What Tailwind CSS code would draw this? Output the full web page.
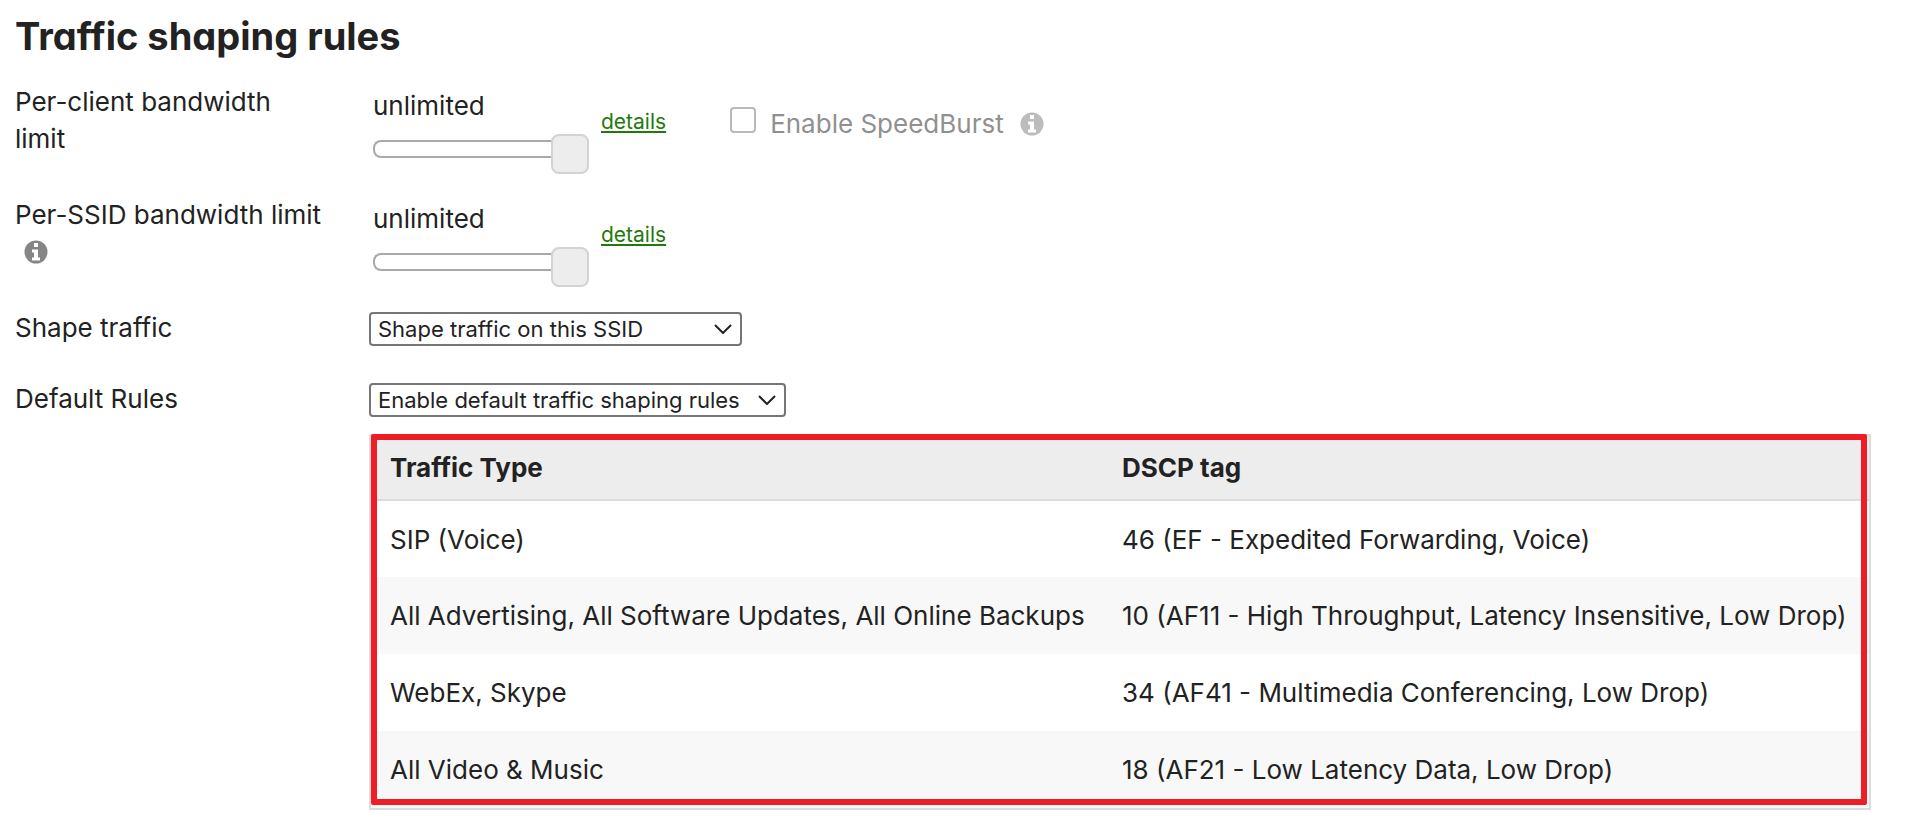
<!DOCTYPE html>
<html lang="en">
  <head>
    <meta charset="UTF-8" />
    <meta name="viewport" content="width=device-width, initial-scale=1.0" />
    <title>Traffic shaping rules</title>
    <script src="https://cdn.jsdelivr.net/npm/@tailwindcss/browser@4"></script>
  </head>
  <body class="bg-white font-['Inter',sans-serif] text-[26px] leading-[37px] text-[#222]">
    <main class="pl-[15px] pr-[54px] pt-[11px]">
      <h1 class="mb-[22px] text-[38px] leading-[50px] font-bold [font-feature-settings:'cv11','ss03']">
        Traffic shaping rules
      </h1>

      <form class="grid grid-cols-[354px_1fr]">
        <!-- Per-client limit -->
        <label for="clientLimit" class="h-[113px] pr-16">Per-client bandwidth limit</label>
        <div class="flex h-[113px] items-start pl-1">
          <div class="mt-1 w-[216px]">
            <output for="clientLimit" class="block">unlimited</output>
            <input
              id="clientLimit"
              type="range"
              value="100"
              class="mt-4 block h-[18px] w-full appearance-none bg-transparent [&::-webkit-slider-runnable-track]:h-[18px] [&::-webkit-slider-runnable-track]:rounded-l-lg [&::-webkit-slider-runnable-track]:border-2 [&::-webkit-slider-runnable-track]:border-r-0 [&::-webkit-slider-runnable-track]:border-[#a9a9a9] [&::-webkit-slider-thumb]:-mt-2 [&::-webkit-slider-thumb]:h-10 [&::-webkit-slider-thumb]:w-[38px] [&::-webkit-slider-thumb]:appearance-none [&::-webkit-slider-thumb]:rounded-lg [&::-webkit-slider-thumb]:border-2 [&::-webkit-slider-thumb]:border-[#d3d3d3] [&::-webkit-slider-thumb]:bg-[#ededed]"
            />
          </div>
          <a href="#" class="mt-5 ml-3 text-[21px] text-[#1f7a0c] underline decoration-2 underline-offset-2">details</a>
          <div class="mt-[22px] ml-16 flex items-start">
            <input
              id="speedBurst"
              type="checkbox"
              disabled
              class="mt-0.5 size-[26px] appearance-none rounded border-2 border-[#b9b9b9] bg-white"
            />
            <label for="speedBurst" class="ml-[14px] text-[#909090]">Enable SpeedBurst</label>
            <svg viewBox="0 0 24 24" class="mt-[7px] ml-4 size-6" aria-hidden="true">
              <circle cx="12" cy="12" r="11.5" fill="#bcbcbc" />
              <path d="M10 3h4v4h-4zM8 9.500h6v8h2V20.500H8v-3h2v-5H8z" fill="#fff" />
            </svg>
          </div>
        </div>

        <!-- Per-SSID limit -->
        <label for="ssidLimit" class="h-[113px] pr-8">
          Per-SSID bandwidth limit
          <svg viewBox="0 0 24 24" class="mt-[7px] ml-[9px] size-6" aria-hidden="true">
            <circle cx="12" cy="12" r="11.500" fill="#858585" />
            <path d="M10 3h4v4h-4zM8 9.500h6v8h2V20.500H8v-3h2v-5H8z" fill="#fff" />
          </svg>
        </label>
        <div class="flex h-[113px] items-start pl-1">
          <div class="mt-1 w-[216px]">
            <output for="ssidLimit" class="block">unlimited</output>
            <input
              id="ssidLimit"
              type="range"
              value="100"
              class="mt-4 block h-[18px] w-full appearance-none bg-transparent [&::-webkit-slider-runnable-track]:h-[18px] [&::-webkit-slider-runnable-track]:rounded-l-lg [&::-webkit-slider-runnable-track]:border-2 [&::-webkit-slider-runnable-track]:border-r-0 [&::-webkit-slider-runnable-track]:border-[#a9a9a9] [&::-webkit-slider-thumb]:-mt-2 [&::-webkit-slider-thumb]:h-10 [&::-webkit-slider-thumb]:w-[38px] [&::-webkit-slider-thumb]:appearance-none [&::-webkit-slider-thumb]:rounded-lg [&::-webkit-slider-thumb]:border-2 [&::-webkit-slider-thumb]:border-[#d3d3d3] [&::-webkit-slider-thumb]:bg-[#ededed]"
            />
          </div>
          <a href="#" class="mt-5 ml-3 text-[21px] text-[#1f7a0c] underline decoration-2 underline-offset-2">details</a>
        </div>

        <!-- Shaping selects -->
        <label for="shapeTraffic" class="h-[71px]">Shape traffic</label>
        <div class="pt-[3px]">
          <div class="relative w-[373px]">
            <select
              id="shapeTraffic"
              class="block h-[34px] w-full appearance-none rounded border-2 border-[#767676] bg-white pl-[7px] text-[22px] leading-[30px]"
            >
              <option>Shape traffic on this SSID</option>
              <option>Don't shape traffic on this SSID</option>
            </select>
            <svg viewBox="0 0 18 10" class="pointer-events-none absolute top-3 right-[10px] h-[10px] w-[18px]" aria-hidden="true">
              <path d="M1 1l8 8 8-8" fill="none" stroke="#222" stroke-width="2" />
            </svg>
          </div>
        </div>

        <label for="defaultRules" class="h-[54px]">Default Rules</label>
        <div class="pt-[3px]">
          <div class="relative w-[417px]">
            <select
              id="defaultRules"
              class="block h-[34px] w-full appearance-none rounded border-2 border-[#767676] bg-white pl-[7px] text-[22px] leading-[30px]"
            >
              <option>Enable default traffic shaping rules</option>
              <option>Disable default traffic shaping rules</option>
            </select>
            <svg viewBox="0 0 18 10" class="pointer-events-none absolute top-3 right-[10px] h-[10px] w-[18px]" aria-hidden="true">
              <path d="M1 1l8 8 8-8" fill="none" stroke="#222" stroke-width="2" />
            </svg>
          </div>
        </div>

        <!-- Default rules table, framed in red -->
        <div class="relative col-start-2 border-2 border-[#dcdcdc]">
          <table class="w-full text-left whitespace-nowrap">
            <thead class="border-b-2 border-[#dcdcdc] bg-[#ededed]">
              <tr class="h-16">
                <th class="pl-[19px] font-bold">Traffic Type</th>
                <th class="w-[766px] pl-[19px] font-bold">DSCP tag</th>
              </tr>
            </thead>
            <tbody>
              <tr class="h-[77px]">
                <td class="pl-[19px]">SIP (Voice)</td>
                <td class="pl-[19px]">46 (EF - Expedited Forwarding, Voice)</td>
              </tr>
              <tr class="h-[77px] bg-[#f8f8f8]">
                <td class="pl-[19px]">All Advertising, All Software Updates, All Online Backups</td>
                <td class="pl-[19px]">10 (AF11 - High Throughput, Latency Insensitive, Low Drop)</td>
              </tr>
              <tr class="h-[77px]">
                <td class="pl-[19px]">WebEx, Skype</td>
                <td class="pl-[19px]">34 (AF41 - Multimedia Conferencing, Low Drop)</td>
              </tr>
              <tr class="h-[77px] bg-[#f8f8f8]">
                <td class="pl-[19px]">All Video &amp; Music</td>
                <td class="pl-[19px]">18 (AF21 - Low Latency Data, Low Drop)</td>
              </tr>
            </tbody>
          </table>
          <div class="pointer-events-none absolute -top-0.5 right-0.5 bottom-[3px] left-0 rounded-xs border-6 border-[#ee1c25]"></div>
        </div>
      </form>
    </main>
  </body>
</html>
